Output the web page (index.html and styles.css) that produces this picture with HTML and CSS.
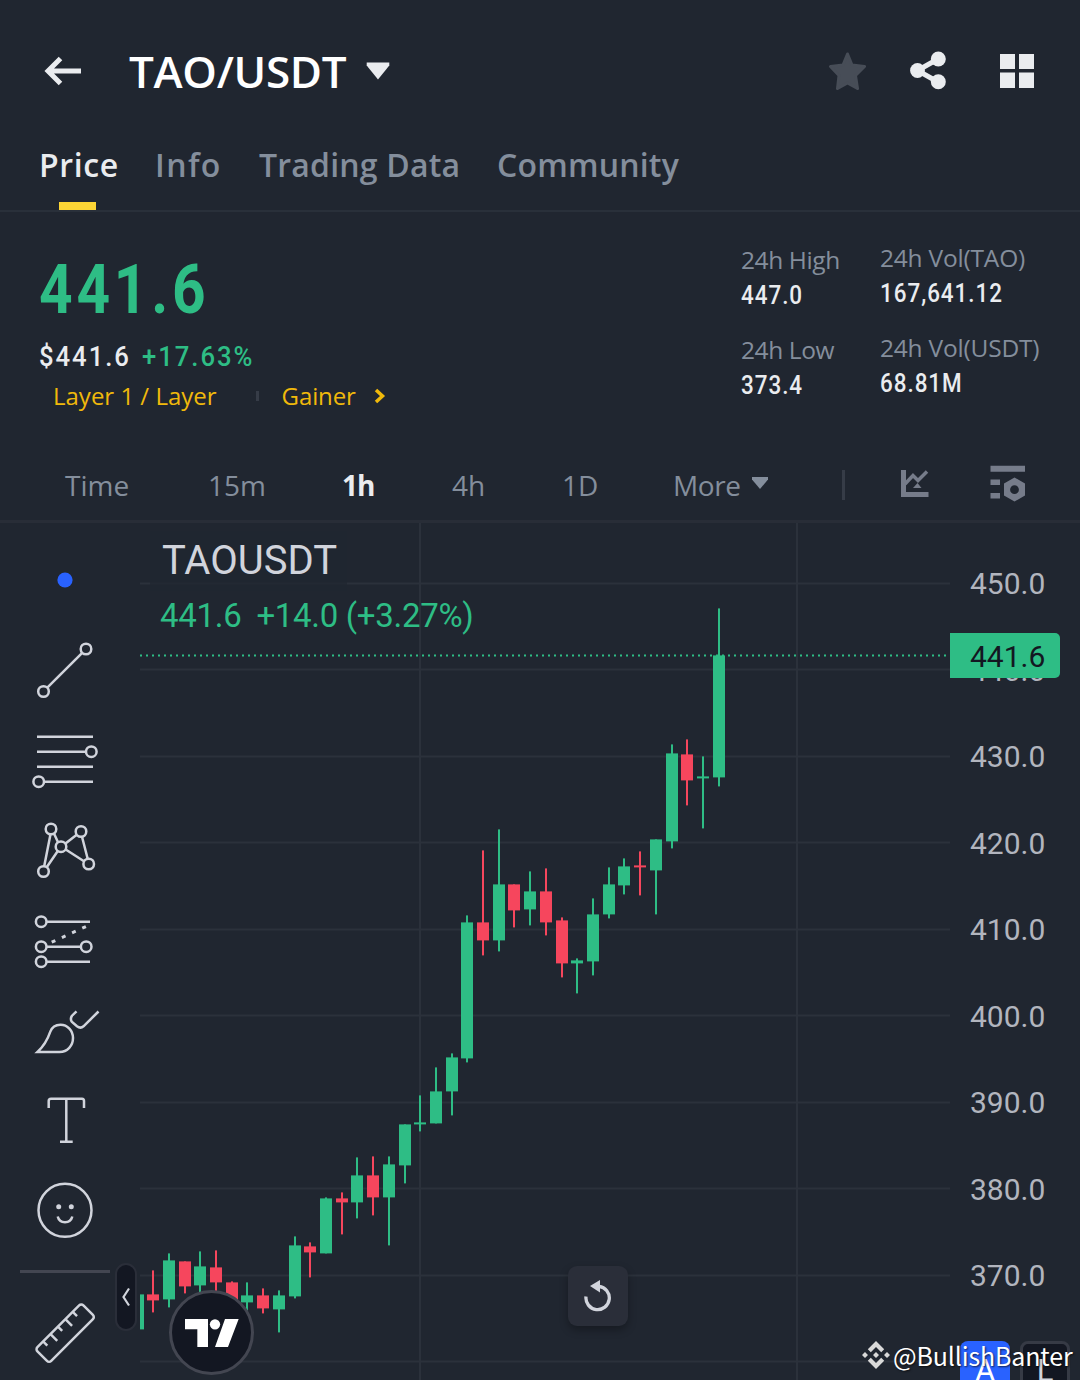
FILE: index.html
```html
<!DOCTYPE html>
<html lang="en">
<head>
    <meta charset="UTF-8">
    <meta name="viewport" content="width=device-width,initial-scale=1" />
    <title>TAO/USDT</title>
    <link rel="stylesheet" href="styles.css">
</head>
<body>
    <div class="header">
        <svg class="back" width="38" height="30" viewBox="44 56 38 30"><path d="M81 71H48M60.5 58.5L48 71L60.5 83.5" fill="none" stroke="#eaecef" stroke-width="5"/></svg>
        <h1 class="pair">TAO/USDT</h1>
        <svg class="caret" width="24" height="18" viewBox="0 0 24 18"><path d="M.7 .5H23.3V3.5L12 17.5L.7 3.5Z" fill="#eaecef"/></svg>
        <div class="actions">
            <svg width="38" height="40" viewBox="828 51 38 40"><path d="M847.500 54L852 65L864.500 66.500L855.500 75.500L857.500 88.500L847.500 83L837.500 88.500L839 75.500L830.500 66.500L843 65Z" fill="#474d57" stroke="#474d57" stroke-width="3" stroke-linejoin="round"/></svg>
            <svg width="38" height="40" viewBox="909 51 38 40"><path d="M938 59L917.500 70.500L938 82" fill="none" stroke="#eaecef" stroke-width="5"/><g fill="#eaecef"><circle cx="917.500" cy="70.500" r="7.400"/><circle cx="938.300" cy="59" r="7.500"/><circle cx="938.300" cy="81.800" r="7.500"/></g></svg>
            <svg width="34" height="35" viewBox="0 .5 34 35"><path d="M0 0H15V15.500H0ZM19 0H34V15.500H19ZM0 19H15V34.500H0ZM19 19H34V34.500H19Z" fill="#eaecef"/></svg>
        </div>
    </div>
    <div class="tabs">
        <span class="tab active">Price</span>
        <span class="tab info">Info</span>
        <span class="tab trading">Trading Data</span>
        <span class="tab community">Community</span>
    </div>
    <div class="ticker">
        <div class="quote">
            <div class="last">441.6</div>
            <div class="change"><span class="usd">$441.6</span><span class="percent">+17.63%</span></div>
            <div class="tags">
                <span>Layer 1 / Layer</span>
                <i class="tag-line"></i>
                <span class="gainer">Gainer</span>
                <svg width="12" height="16" viewBox="0 0 12 16"><path d="M2 2L8.500 8L2 14" fill="none" stroke="#f0b90b" stroke-width="3.500"/></svg>
            </div>
        </div>
        <dl class="stats range">
            <dt>24h High</dt><dd>447.0</dd>
            <dt>24h Low</dt><dd>373.4</dd>
        </dl>
        <dl class="stats volume">
            <dt>24h Vol(TAO)</dt><dd>167,641.12</dd>
            <dt>24h Vol(USDT)</dt><dd>68.81M</dd>
        </dl>
    </div>
    <div class="intervals">
        <span>Time</span>
        <span>15m</span>
        <span class="current">1h</span>
        <span>4h</span>
        <span>1D</span>
        <span class="more">More<svg width="16" height="12" viewBox="0 0 16 12"><path d="M0 0H16V2.500L8 12L0 2.500Z" fill="#848e9c"/></svg></span>
        <i class="split"></i>
        <svg width="28" height="29" viewBox="0 0 28 29"><path d="M2.500 1V25.500H27.500" fill="none" stroke="#767c8a" stroke-width="5"/><path d="M4 15L12 6.500L17 11.500L26 2.500" fill="none" stroke="#767c8a" stroke-width="3.500"/><path d="M12 19L16.500 14L20.500 19Z" fill="#767c8a"/></svg>
        <svg width="36" height="37" viewBox="0 0 36 37"><path d="M.500 .800H35V6.800H.500ZM.500 14.500H10V20H.500ZM.500 28H10V33.500H.500Z" fill="#767c8a"/><path d="M24.500 12.500L35 18.500V30.500L24.500 36.500L14 30.500V18.500ZM24.500 20.300A4.400 4.400 0 1 0 24.500 29.100A4.400 4.400 0 1 0 24.500 20.300Z" fill="#767c8a" fill-rule="evenodd"/></svg>
    </div>
    <div class="chart">
        <div class="tools">
            <svg viewBox="0 0 130 90"><circle class="dot" cx="65" cy="45" r="7.600"/></svg>
            <svg viewBox="0 0 130 90"><path d="M47.300 62.700L82.200 27.800"/><circle cx="86" cy="24" r="5.300"/><circle cx="43.500" cy="66.500" r="5.300"/></svg>
            <svg viewBox="0 0 130 90"><path d="M37 21.700H93M37 36.700H86M37 51.700H93M44 66.700H93"/><circle cx="91.300" cy="36.700" r="5.300"/><circle cx="38.700" cy="66.700" r="5.300"/></svg>
            <svg viewBox="0 0 130 90"><path d="M50.500 29.300L44.200 61.200M54 28.500L58 37.200M65.500 38.500L76.700 29.700M82 31.800L87.700 53.700M65.700 44.500L84 56.200M57.800 46L46.700 62.200"/><circle cx="51" cy="24" r="5.300"/><circle cx="81" cy="26.500" r="5.300"/><circle cx="61" cy="41.700" r="5.300"/><circle cx="88.700" cy="59" r="5.300"/><circle cx="43.500" cy="66.500" r="5.300"/></svg>
            <svg viewBox="0 0 130 90"><path d="M46.500 26.700H90M46.500 51.700H81M46.500 66.700H90"/><path class="dots" d="M51.700 47.200L86.500 31.300"/><circle cx="41.200" cy="26.700" r="5.300"/><circle cx="41.200" cy="51.700" r="5.300"/><circle cx="86.200" cy="51.700" r="5.300"/><circle cx="41.200" cy="66.700" r="5.300"/></svg>
            <svg viewBox="0 0 130 90"><path d="M37.500 67H59.500C67.500 67 73 60.500 73 53C73 45.500 67.500 39.700 60.500 39.700C55.500 39.700 51.800 42.500 50.300 46.700C47.500 55 43.500 61.500 37.500 67Z"/><path d="M76.500 26.300L72 30.700Q69.800 34 72 37L77 41.300Q80.500 44 83.500 41.300L98.500 26.500"/></svg>
            <svg viewBox="0 0 130 90"><path d="M48.700 33V26Q48.700 23.700 51 23.700H82Q84 23.700 84 26V33M66.300 24V66.500M60 66.800H72.700"/></svg>
            <svg viewBox="0 0 130 90"><circle cx="65" cy="45.300" r="26.500"/><circle class="eye" cx="58.700" cy="41.700" r="2.500"/><circle class="eye" cx="71.300" cy="41.700" r="2.500"/><path d="M57.700 51.500C59.500 59 70.500 59 72.300 51.500"/></svg>
            <i class="tools-line"></i>
            <svg viewBox="0 0 130 90"><g transform="translate(65 45) rotate(-45)"><rect x="-32.500" y="-9.500" width="65" height="19.500" rx="3"/><path d="M-21.500 -9.500V-3.500M-11 -9.500V0M-.500 -9.500V-3.500M10 -9.500V0M20.500 -9.500V-3.500"/></g></svg>
        </div>
        <svg class="plot" id="plot" width="810" height="857" viewBox="140 523 810 857"></svg>
        <div class="axis">
            <span>450.0</span>
            <span>440.0</span>
            <span>430.0</span>
            <span>420.0</span>
            <span>410.0</span>
            <span>400.0</span>
            <span>390.0</span>
            <span>380.0</span>
            <span>370.0</span>
        </div>
        <div class="legend">
            <div class="symbol">TAOUSDT</div>
            <div class="values"><span>441.6</span><span>+14.0 (+3.27%)</span></div>
        </div>
        <div class="price-tag">441.6</div>
        <div class="collapse"><svg width="10" height="20" viewBox="0 0 10 20"><path d="M8 1.500L2.500 10L8 18.500" fill="none" stroke="#d1d4dc" stroke-width="2.200"/></svg></div>
        <div class="tv"><svg width="54" height="28" viewBox="165 720 162 84"><path d="M165 720H234V804H202V751H165ZM285 720H326L294 804H255Z" fill="#fff"/><circle cx="255" cy="736" r="15.500" fill="#fff"/></svg></div>
        <div class="reset"><svg width="28" height="34" viewBox="584 1281 28 34"><path d="M599 1288.300A11.700 11.700 0 1 1 586 1298.500" fill="none" stroke="#d1d4dc" stroke-width="3.300"/><path d="M600 1282V1294.500L590 1288Z" fill="#d1d4dc"/></svg></div>
        <div class="scale auto">A</div>
        <div class="scale log">L</div>
        <div class="author">
            <svg width="28" height="28" viewBox="0 0 28 28"><path d="M14 0L22.200 8.200L19.200 11.200L14 6L8.800 11.200L5.800 8.200ZM14 28L22.200 19.800L19.200 16.800L14 22L8.800 16.800L5.800 19.800ZM14 11L17 14L14 17L11 14ZM3 11L6 14L3 17L0 14ZM25 11L28 14L25 17L22 14Z" fill="#d9d9d9"/></svg>
            <span>@BullishBanter</span>
        </div>
    </div>
<script>
    // x, wick top, wick bottom, body top, body bottom, up
    var candles=[
        [138,1294,1329,1294,1329,1],[153,1270,1312,1294,1300,0],[169,1253,1307,1260,1299,1],
        [185,1261,1293,1261,1286,0],[200,1251,1293,1266,1285,1],[216,1250,1295,1267,1282,0],
        [232,1281,1305,1282,1302,0],[247,1282,1310,1295,1302,1],[263,1288,1313,1295,1308,0],
        [279,1290,1332,1295,1309,1],[295,1236,1298,1245,1296,1],[310,1242,1277,1246,1252,0],
        [326,1197,1253,1198,1253,1],[342,1192,1234,1198,1202,0],[357,1157,1218,1175,1202,1],
        [373,1156,1215,1175,1197,0],[389,1156,1245,1164,1197,1],[405,1124,1183,1124,1165,1],
        [420,1095,1131,1122,1124,1],[436,1067,1123,1091,1123,1],[452,1053,1115,1057,1091,1],
        [467,915,1062,922,1058,1],[483,850,955,922,940,0],[499,829,951,884,940,1],
        [514,884,927,884,910,0],[530,871,925,891,909,1],[546,868,935,891,922,0],
        [562,917,977,920,963,0],[577,958,993,960,963,1],[593,898,975,914,961,1],
        [609,867,918,884,914,1],[624,858,894,866,885,1],[640,851,895,865,867,0],
        [656,839,914,839,870,1],[672,744,848,753,841,1],[687,739,805,754,780,0],
        [703,756,828,776,778,1],[719,608,786,655,777,1]
    ];
    var rows=[583.5,669.5,756.5,842.5,929.5,1015.5,1102.5,1188.5,1275.5,1361.5];
    var html="";
    for(var i=0;i<rows.length;i++){
        html+='<path class="grid" d="M140 '+rows[i]+'H950"/>';
    }
    html+='<path class="grid" d="M420 523V1380M797 523V1380"/>';
    html+='<path class="last-line" d="M140 655.5H948"/>';
    for(i=0;i<candles.length;i++){
        var c=candles[i];
        html+='<g class="'+(c[5]?"up":"down")+'">';
        html+='<rect x="'+(c[0]-1)+'" y="'+(c[1]+0.4)+'" width="2" height="'+(c[2]-c[1])+'"/>';
        html+='<rect x="'+(c[0]-6)+'" y="'+(c[3]+0.4)+'" width="12" height="'+(c[4]-c[3])+'"/>';
        html+='</g>';
    }
    document.getElementById("plot").innerHTML=html;
</script>
</body>
</html>
```
FILE: styles.css
```css
body{
    width: 1080px;
    height: 1380px;
    margin: 0;
    overflow: hidden;
    background-color: #202630;
    color: #eaecef;
    font-family: "Open Sans", "Noto Sans", sans-serif;
}
svg{
    display: block;
    flex: none;
}
.header{
    display: flex;
    align-items: center;
    height: 142px;
    padding: 0 46px 0 44px;
    box-sizing: border-box;
}
.pair{
    margin: 0 20px 0 47px;
    font-size: 44px;
    font-weight: 600;
    line-height: 60px;
    letter-spacing: -0.3px;
    color: #fff;
}
.actions{
    display: flex;
    align-items: center;
    margin-left: auto;
}
.actions svg{
    margin-left: 43px;
}
.actions svg:last-child{
    margin-left: 53px;
}
.tabs{
    display: flex;
    height: 68px;
    padding-left: 39px;
    border-bottom: 2px solid #29303a;
}
.tab{
    position: relative;
    font-size: 32px;
    font-weight: 600;
    line-height: 46px;
    letter-spacing: 0.2px;
    color: #848e9c;
    white-space: nowrap;
}
.tab.active{
    width: 116px;
    letter-spacing: 0.6px;
    color: #eaecef;
}
.tab.active:after{
    content: "";
    position: absolute;
    left: 20px;
    bottom: 0;
    width: 37px;
    height: 8px;
    background-color: #fcd535;
}
.tab.info{
    width: 104px;
    letter-spacing: 1.4px;
}
.tab.trading{
    width: 238px;
}
.ticker{
    display: flex;
    height: 238px;
}
.quote{
    flex: none;
    width: 741px;
    padding: 37px 0 0 39px;
    box-sizing: border-box;
}
/* narrow, widely spaced digits */
.last{
    font-family: Roboto, sans-serif;
    font-size: 69px;
    font-weight: 700;
    line-height: 82px;
    letter-spacing: 4.4px;
    color: #2ebd85;
    transform: scaleX(0.85);
    transform-origin: left;
}
.change{
    display: flex;
    margin-top: 5px;
    font-family: Roboto, sans-serif;
    font-size: 28.5px;
    font-weight: 500;
    line-height: 41px;
    letter-spacing: 2.2px;
}
.change span{
    transform: scaleX(0.9);
    transform-origin: left;
}
.usd{
    width: 103px;
}
.percent{
    color: #2ebd85;
}
.tags{
    display: flex;
    align-items: center;
    padding-left: 14px;
    font-size: 24px;
    line-height: 38px;
    color: #f0b90b;
}
.tag-line{
    width: 3px;
    height: 10px;
    margin: 0 23px 0 39px;
    background-color: #363c47;
}
.gainer{
    margin-right: 18px;
    letter-spacing: -0.1px;
}
.stats{
    margin: 0;
    white-space: nowrap;
}
.stats dt{
    font-size: 24.5px;
    line-height: 34px;
    letter-spacing: -0.4px;
    color: #848e9c;
}
.stats dd{
    margin: 0 0 20px;
    font-family: Roboto, sans-serif;
    font-size: 25.5px;
    font-weight: 500;
    line-height: 36px;
    letter-spacing: 1.1px;
    transform: scaleX(0.88);
    transform-origin: left;
}
.range{
    width: 139px;
    flex: none;
    padding-top: 31px;
}
.volume{
    padding-top: 29px;
}
.volume dt{
    letter-spacing: -0.2px;
}
.intervals{
    display: grid;
    grid-template-columns: 143px 135px 109px 110px 111px 169px 59px 89px 36px;
    align-items: center;
    height: 69px;
    padding: 0 0 1px 65px;
    border-bottom: 3px solid #282d37;
    margin-bottom: -1px;
    font-size: 28px;
    line-height: 38px;
    color: #848e9c;
}
.intervals .current{
    margin-left: -1px;
    color: #eaecef;
    font-weight: 700;
    letter-spacing: -1px;
}
.intervals > svg{
    margin-top: -2px;
}
.more{
    display: flex;
    align-items: center;
    letter-spacing: -0.4px;
}
.more svg{
    margin: -4px 0 0 11px;
}
.split{
    width: 3px;
    height: 30px;
    background-color: #363c47;
}
.chart{
    position: relative;
    display: flex;
    height: 857px;
    margin-top: 1px;
    overflow: hidden;
    font-family: Roboto, sans-serif;
}
.tools{
    width: 140px;
    padding-top: 12px;
    box-sizing: border-box;
}
.tools svg{
    width: 130px;
    height: 90px;
    fill: none;
    stroke: #d1d4dc;
    stroke-width: 2.5;
}
.tools .dot{
    fill: #2962ff;
    stroke: none;
}
.tools .eye{
    fill: #d1d4dc;
    stroke: none;
}
.tools .dots{
    stroke-width: 3;
    stroke-dasharray: 4 7.2;
}
.tools-line{
    display: block;
    width: 90px;
    height: 3px;
    margin: 15px 0 15px 20px;
    background-color: #434651;
}
.grid{
    fill: none;
    stroke: #2b313b;
    stroke-width: 2;
}
.last-line{
    stroke: #2ebd85;
    stroke-width: 2;
    stroke-dasharray: 2 4;
}
.up{
    fill: #2ebd85;
}
.down{
    fill: #f6465d;
}
.axis{
    display: flex;
    flex-direction: column;
    padding: 18px 0 0 20px;
    font-size: 30px;
    line-height: 86.5px;
    color: #b2b5be;
}
.legend{
    position: absolute;
    left: 150px;
    top: 8px;
    white-space: nowrap;
}
.symbol{
    width: 185px;
    padding-left: 12px;
    background-color: rgba(32,38,48,0.7);
    font-size: 40px;
    line-height: 60px;
    color: #d1d4dc;
}
.values{
    display: flex;
    gap: 15px;
    padding-left: 10px;
    font-size: 33px;
    line-height: 50px;
    letter-spacing: -0.3px;
    color: #2ebd85;
}
.price-tag{
    position: absolute;
    left: 950px;
    top: 110px;
    width: 110px;
    height: 45px;
    padding-left: 20px;
    box-sizing: border-box;
    border-radius: 0 5px 5px 0;
    background-color: #2ebd85;
    color: #131722;
    font-size: 30px;
    line-height: 47px;
}
.collapse, .tv, .reset{
    position: absolute;
    display: flex;
    align-items: center;
    justify-content: center;
    box-sizing: border-box;
}
.collapse{
    left: 115px;
    top: 740px;
    width: 22px;
    height: 68px;
    border: 2px solid #2a2e39;
    border-radius: 11px;
    background-color: #131722;
}
.tv{
    left: 169px;
    top: 767px;
    width: 85px;
    height: 85px;
    border: 3px solid #434651;
    border-radius: 50%;
    background-color: #131722;
}
.reset{
    left: 568px;
    top: 743px;
    width: 60px;
    height: 60px;
    border-radius: 9px;
    background-color: #2a2e39;
    box-shadow: 0 4px 8px rgba(0,0,0,0.3);
}
.scale{
    position: absolute;
    top: 818px;
    width: 50px;
    height: 50px;
    box-sizing: border-box;
    border-radius: 8px;
    color: #d1d4dc;
    font-size: 31px;
    line-height: 60px;
    text-align: center;
}
.auto{
    left: 960px;
    background-color: #2962ff;
    color: #fff;
}
.log{
    left: 1020px;
    border: 3px solid #363a45;
    background-color: #131722;
    line-height: 54px;
}
.author{
    position: absolute;
    left: 862px;
    top: 814px;
    display: flex;
    align-items: center;
    gap: 3px;
    color: #fff;
    font-family: "Noto Sans CJK SC", sans-serif;
    font-size: 25px;
    line-height: 36px;
    letter-spacing: -0.15px;
    text-shadow: 1px 1px 2px rgba(0,0,0,0.7);
}
```
